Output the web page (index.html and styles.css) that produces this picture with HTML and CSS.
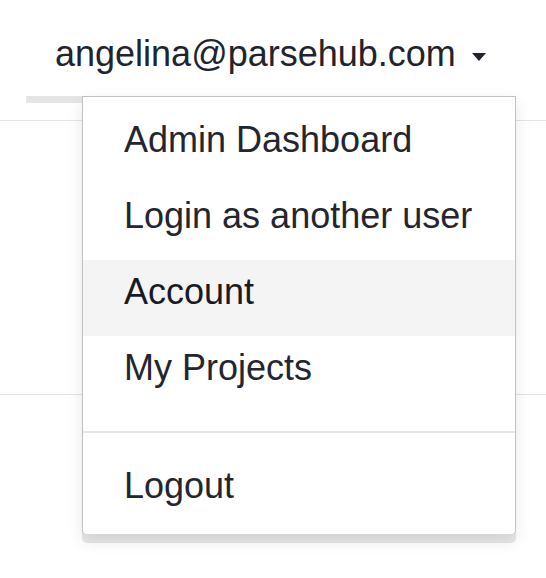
FILE: index.html
```
<!DOCTYPE html>
<html lang="en">
<head>
<meta charset="utf-8">
<title>Account menu</title>
<link rel="stylesheet" href="styles.css">
</head>
<body>
<div class="page">
  <header class="navbar">
    <div class="nav-item">
      <a class="toggle" href="#">angelina@parsehub.com<span class="caret"></span></a>
      <div class="open-bar"></div>
      <ul class="dropdown">
        <li><a class="item" href="#">Admin Dashboard</a></li>
        <li><a class="item" href="#">Login as another user</a></li>
        <li><a class="item active" href="#">Account</a></li>
        <li><a class="item" href="#">My Projects</a></li>
        <li class="divider"></li>
        <li><a class="item" href="#">Logout</a></li>
      </ul>
    </div>
  </header>
  <section class="content"></section>
</div>
</body>
</html>
```

FILE: styles.css
```
* { box-sizing: border-box; }

html, body {
  margin: 0;
  padding: 0;
  background: #ffffff;
}

body {
  font-family: "Liberation Sans", Arial, Helvetica, sans-serif;
  color: #21232d;
}

.page {
  width: 546px;
  min-height: 578px;
}

.navbar {
  height: 121px;
  border-bottom: 1px solid #e3e3e3;
}

.nav-item {
  position: relative;
  z-index: 2;
  margin-left: 26px;
  padding-top: 34px;
  width: 489px;
}

.toggle {
  display: block;
  padding: 0 0 22px 29px;
  font-size: 36px;
  line-height: 40px;
  color: #21232d;
  text-decoration: none;
  white-space: nowrap;
}

.caret {
  display: inline-block;
  width: 0;
  height: 0;
  margin-left: 16px;
  vertical-align: 5px;
  border-left: 7.5px solid transparent;
  border-right: 7.5px solid transparent;
  border-top: 8px solid #21232d;
}

.open-bar {
  height: 7px;
  background: #e5e5e5;
}

.dropdown {
  position: absolute;
  top: 96px;
  left: 56px;
  width: 434px;
  margin: 0;
  padding: 11px 0 4px;
  list-style: none;
  background: #ffffff;
  border: 1px solid #c2c2c2;
  border-bottom-color: #d6d6d6;
  border-radius: 0 0 5px 5px;
  box-shadow: 0 8px 0 rgba(0, 0, 0, 0.09), 0 6px 16px rgba(0, 0, 0, 0.1);
}

.item {
  display: block;
  height: 76px;
  padding: 12px 0 24px 41px;
  font-size: 36px;
  line-height: 40px;
  color: #23252f;
  text-decoration: none;
  white-space: nowrap;
}

.item.active {
  background: #f4f4f4;
  color: #1a1b22;
}

.divider {
  height: 2px;
  margin: 19px 0 21px;
  background: #e6e6e6;
}

.content {
  height: 274px;
  border-bottom: 1px solid #e3e3e3;
}
```
